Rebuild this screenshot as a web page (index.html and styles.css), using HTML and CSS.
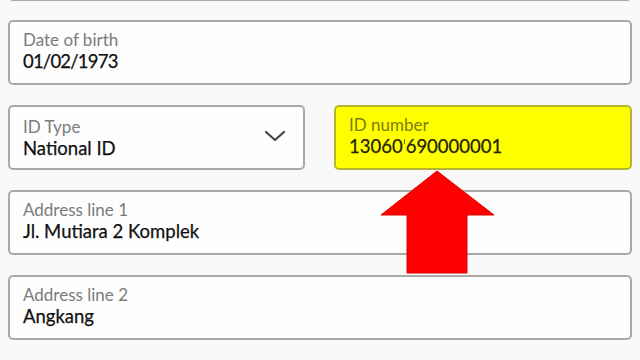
FILE: index.html
```html
<!DOCTYPE html>
<html lang="en">
<head>
<meta charset="utf-8">
<title>Personal details</title>
<link rel="stylesheet" href="styles.css">
</head>
<body>
<main class="form">
  <div class="field cut"></div>

  <div class="field">
    <span class="label">Date of birth</span>
    <span class="value date">01/02/1973</span>
  </div>

  <div class="row">
    <div class="field select">
      <div class="texts">
        <span class="label">ID Type</span>
        <span class="value">National ID</span>
      </div>
      <svg class="chevron" width="22" height="12" viewBox="0 0 22 12" aria-hidden="true">
        <path d="M2 2 L11 10 L20 2" fill="none" stroke="#444" stroke-width="2.2" stroke-linecap="round" stroke-linejoin="round"/>
      </svg>
    </div>
    <div class="field highlight">
      <span class="label">ID number</span>
      <span class="value">13060<span class="tick"></span>690000001</span>
    </div>
  </div>

  <div class="field">
    <span class="label">Address line 1</span>
    <span class="value">Jl. Mutiara 2 Komplek</span>
  </div>

  <div class="field">
    <span class="label">Address line 2</span>
    <span class="value">Angkang</span>
  </div>

  <div class="row">
    <div class="field"></div>
    <div class="field"></div>
  </div>

  <svg class="arrow" width="120" height="106" viewBox="0 0 120 106" aria-hidden="true">
    <polygon points="57,1 1,45 27,45 27,103 87,103 87,45 114,45" fill="#ff0000" stroke="#e00000" stroke-width="1"/>
  </svg>
</main>
</body>
</html>
```
FILE: styles.css
```css
html, body {
  margin: 0;
  padding: 0;
  background: #f9f9f9;
  overflow: hidden;
}

body {
  width: 640px;
  height: 360px;
  font-family: Lato, "Open Sans", sans-serif;
}

.form {
  position: relative;
  display: flex;
  flex-direction: column;
  padding: 0 8px;
}

.field {
  box-sizing: border-box;
  height: 65px;
  margin-bottom: 20px;
  padding: 8px 13px 0;
  background: #fefefe;
  border: 2px solid #a9a9a9;
  border-radius: 5px;
  display: flex;
  flex-direction: column;
}

.field.cut {
  margin-top: -64px;
  margin-bottom: 19px;
}

.label {
  font-size: 17px;
  line-height: 20px;
  color: #7b7b7b;
}

.value {
  font-size: 18.5px;
  line-height: 24px;
  color: #111;
  margin-top: -1px;
  -webkit-text-stroke: 0.25px #111;
}

.value.date {
  letter-spacing: -0.8px;
}

.row {
  display: grid;
  grid-template-columns: 297px 298px;
  column-gap: 29px;
}

.field.select {
  flex-direction: row;
  align-items: center;
  justify-content: space-between;
  padding-right: 17px;
  padding-top: 0;
}

.texts {
  display: flex;
  flex-direction: column;
  margin-top: 1px;
}

.chevron {
  display: block;
  margin-top: -4px;
}

.field.highlight {
  background: #ffff00;
  border-color: #b6b532;
}

.highlight .label {
  color: #7d7a12;
}

.highlight .value {
  color: #1f1f0a;
  -webkit-text-stroke: 0.25px #1f1f0a;
}

.tick {
  display: inline-block;
  width: 1px;
  height: 5px;
  margin: 0 1px 0 1px;
  vertical-align: 9px;
  background: #6d6a20;
}

.arrow {
  position: absolute;
  left: 380px;
  top: 170px;
}
```
